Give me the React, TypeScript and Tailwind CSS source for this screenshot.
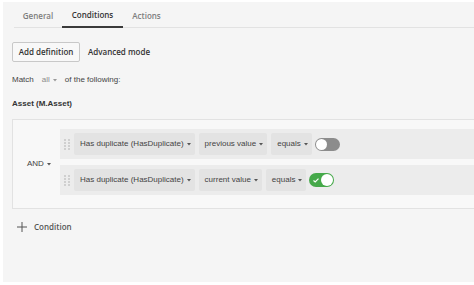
import React from "react";

function Caret({ color = "#555" }: { color?: string }) {
  return (
    <svg width="4" height="3" viewBox="0 0 4 3" className="ml-[3px] mt-px shrink-0">
      <path d="M0 0 L4 0 L2 2.5 Z" fill={color} />
    </svg>
  );
}

function Handle() {
  return (
    <div className="grid grid-cols-2 gap-x-[2px] gap-y-[1px] w-[6px] shrink-0">
      {Array.from({ length: 8 }).map((_, i) => (
        <span key={i} className="w-[2px] h-[2px] bg-[#cfcfcf]" />
      ))}
    </div>
  );
}

function Drop({ label }: { label: string }) {
  return (
    <div className="h-[22px] bg-[#e3e3e3] rounded-[2px] flex items-center pl-[6px] pr-[4px] text-[#444] shrink-0 whitespace-nowrap">
      <span>{label}</span>
      <Caret />
    </div>
  );
}

function Toggle({ on }: { on: boolean }) {
  if (on) {
    return (
      <div className="w-[25px] h-[14px] rounded-full bg-[#46a94a] flex items-center justify-end pr-[1px] relative shrink-0">
        <svg width="6" height="5" viewBox="0 0 6 5" className="absolute left-[4px] top-[5px]">
          <path d="M0.5 2.5 L2.2 4 L5.5 0.7" stroke="#fff" strokeWidth="1.2" fill="none" />
        </svg>
        <span className="w-[12px] h-[12px] rounded-full bg-white" />
      </div>
    );
  }
  return (
    <div className="w-[25px] h-[13px] rounded-full bg-[#8c8c8c] flex items-center pl-[1px] shrink-0">
      <span className="w-[11px] h-[11px] rounded-full bg-white" />
    </div>
  );
}

export default function App() {
  const rows = [
    { op: "previous value", on: false },
    { op: "current value", on: true },
  ];

  return (
    <div className="w-full h-[285px] bg-white overflow-hidden" style={{ fontFamily: '"Liberation Sans", Arial, sans-serif' }}>
      <div className="ml-[3px] mt-[2px] h-[280px] bg-[#f5f5f5] overflow-hidden">
        {/* tabs */}
        <div className="ml-[11px] flex border-b border-[#e2e2e2] h-[26px] text-[8px] font-semibold" style={{ fontFamily: '"Open Sans", sans-serif' }}>
          <div className="w-[48px] flex items-center justify-center pt-[2px] text-[#7d7d7d]">General</div>
          <div className="w-[61px] flex items-center justify-center pt-[2px] text-[#333] border-b-2 border-[#3a3a3a] -mb-px">Conditions</div>
          <div className="w-[47px] flex items-center justify-center pt-[2px] text-[#7d7d7d]">Actions</div>
        </div>

        <div className="pl-[9px] text-[8px] text-[#333]">
          {/* buttons */}
          <div className="mt-[14px] flex items-center gap-[8px] font-semibold" style={{ fontFamily: '"Open Sans", sans-serif' }}>
            <div className="w-[68px] h-[20px] border border-[#c8c8c8] bg-[#f8f8f8] rounded-[2px] flex items-center justify-center text-[#333]">
              Add definition
            </div>
            <div className="text-[#333]">Advanced mode</div>
          </div>

          {/* match */}
          <div className="mt-[13px] h-[10px] flex items-center text-[#444]">
            <span>Match</span>
            <span className="ml-[8px] text-[#8a8a8a]">all</span>
            <Caret color="#999" />
            <span className="ml-[8px]">of the following:</span>
          </div>

          <div className="mt-[14px] h-[10px] flex items-center font-bold text-[#333]">Asset (M.Asset)</div>

          {/* group */}
          <div className="mt-[10px] -mr-6 border border-[#e2e2e2] bg-[#f8f8f8] pt-[9px] pb-[13px] flex">
            <div className="w-[47px] flex items-center pl-[14px] pt-[4px] text-[#444]">
              <span>AND</span>
              <Caret />
            </div>
            <div className="flex-1 flex flex-col gap-[6px]">
              {rows.map((r, i) => (
                <div key={i} className="h-[30px] bg-[#ececec] flex items-center pl-[4px] gap-[4px]">
                  <Handle />
                  <Drop label="Has duplicate (HasDuplicate)" />
                  <Drop label={r.op} />
                  <Drop label="equals" />
                  <div className="-ml-px">
                    <Toggle on={r.on} />
                  </div>
                </div>
              ))}
            </div>
          </div>

          {/* add condition */}
          <div className="mt-[12px] h-[12px] flex items-center font-semibold text-[#555]" style={{ fontFamily: '"Open Sans", sans-serif' }}>
            <svg width="10" height="10" viewBox="0 0 10 10" className="ml-[5px]">
              <path d="M5 0 V10 M0 5 H10" stroke="#555" strokeWidth="1" />
            </svg>
            <span className="ml-[7px]">Condition</span>
          </div>
        </div>
      </div>
    </div>
  );
}
